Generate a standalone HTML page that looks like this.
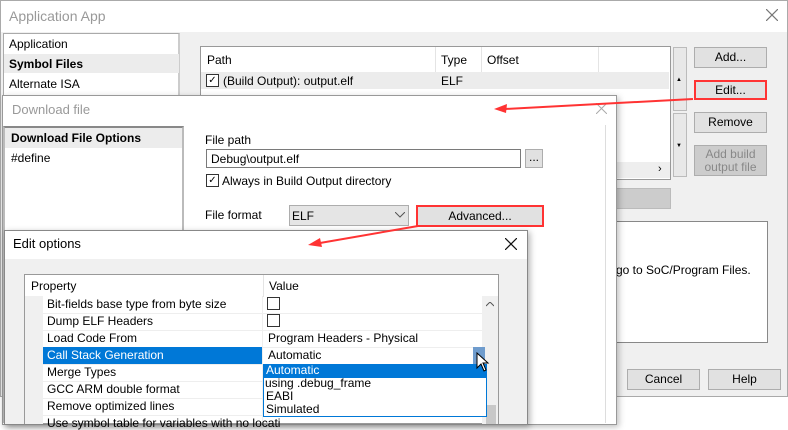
<!DOCTYPE html>
<html><head><style>
*{margin:0;padding:0;box-sizing:border-box}
body{width:788px;height:423px;overflow:hidden;background:#fff;font-family:"Liberation Sans",sans-serif;font-size:12px;color:#000;position:relative}
.a{position:absolute}
.t{position:absolute;white-space:nowrap;line-height:14px}
.btn{position:absolute;background:#e1e1e1;border:1px solid #adadad;text-align:center;line-height:18px}
.cb{position:absolute;width:13px;height:13px;border:1px solid #333;background:#fff}
</style></head><body>
<div class="a" style="left:0;top:0;width:788px;height:397px;border:1px solid #aaa;background:#f0f0f0"></div>
<div class="a" style="left:1px;top:1px;width:786px;height:31px;background:#fff"></div>
<div class="t" style="left:9px;top:9px;font-size:14px;color:#999">Application App</div>
<svg class="a" style="left:766px;top:9px" width="12" height="12"><path d="M0 0L12 12M12 0L0 12" stroke="#777" stroke-width="1.2"/></svg>
<div class="a" style="left:3px;top:33px;width:177px;height:70px;background:#fff;border:1px solid #aaa;border-right:2px solid #ccc"></div>
<div class="a" style="left:4px;top:54px;width:175px;height:19px;background:#ececec"></div>
<div class="t" style="left:9px;top:37px">Application</div>
<div class="t" style="left:9px;top:57px;font-weight:bold">Symbol Files</div>
<div class="t" style="left:9px;top:77px">Alternate ISA</div>
<div class="a" style="left:200px;top:46px;width:471px;height:134px;background:#fff;border:1px solid #999"></div>
<div class="a" style="left:201px;top:72px;width:468px;height:17px;background:#ececec"></div>
<div class="a" style="left:435px;top:47px;width:1px;height:25px;background:#e4e4e4"></div>
<div class="a" style="left:481px;top:47px;width:1px;height:25px;background:#e4e4e4"></div>
<div class="a" style="left:598px;top:47px;width:1px;height:25px;background:#e4e4e4"></div>
<div class="t" style="left:207px;top:53px">Path</div>
<div class="t" style="left:441px;top:53px">Type</div>
<div class="t" style="left:487px;top:53px">Offset</div>
<div class="cb" style="left:206px;top:74px;font-size:10px;line-height:11px;text-align:center">✓</div>
<div class="t" style="left:223px;top:74px">(Build Output): output.elf</div>
<div class="t" style="left:441px;top:74px">ELF</div>
<div class="a" style="left:610px;top:162px;width:60px;height:16px;background:#eee"></div>
<div class="t" style="left:658px;top:162px;font-size:11px">›</div>
<div class="a" style="left:673px;top:47px;width:14px;height:64px;background:#e8e8e8;border:1px solid #bbb"></div>
<div class="a" style="left:673px;top:113px;width:14px;height:64px;background:#e8e8e8;border:1px solid #bbb"></div>
<div class="t" style="left:676px;top:73px;font-size:6px">▲</div>
<div class="t" style="left:676px;top:139px;font-size:6px">▼</div>
<div class="btn" style="left:694px;top:47px;width:73px;height:21px">Add...</div>
<div class="btn" style="left:694px;top:80px;width:73px;height:20px;border:2px solid #f33;line-height:16px">Edit...</div>
<div class="btn" style="left:694px;top:112px;width:73px;height:21px">Remove</div>
<div class="btn" style="left:694px;top:145px;width:73px;height:31px;background:#ccc;color:#888;line-height:13px;padding-top:2px">Add build<br>output file</div>
<div class="a" style="left:615px;top:188px;width:56px;height:21px;background:#ccc;border:1px solid #bbb"></div>
<div class="a" style="left:615px;top:221px;width:153px;height:122px;background:#fff;border:1px solid #888"></div>
<div class="t" style="left:616px;top:263px">go to SoC/Program Files.</div>
<div class="btn" style="left:627px;top:369px;width:73px;height:21px">Cancel</div>
<div class="btn" style="left:708px;top:369px;width:73px;height:21px">Help</div>
<div class="a" style="left:2px;top:95px;width:615px;height:330px;background:#fff;border:1px solid #999;box-shadow:2px 2px 6px rgba(0,0,0,.25)"></div>
<div class="t" style="left:12px;top:103px;font-size:13px;color:#999">Download file</div>
<svg class="a" style="left:596px;top:103px" width="11" height="11"><path d="M0 0L11 11M11 0L0 11" stroke="#aaa" stroke-width="1"/></svg>
<div class="a" style="left:3px;top:126px;width:181px;height:297px;background:#fff;border:2px solid #bbb;border-top-color:#888"></div>
<div class="a" style="left:5px;top:128px;width:177px;height:20px;background:#ececec"></div>
<div class="t" style="left:11px;top:131px;font-weight:bold">Download File Options</div>
<div class="t" style="left:11px;top:151px">#define</div>
<div class="a" style="left:605px;top:125px;width:1px;height:298px;background:#ddd"></div>
<div class="t" style="left:205px;top:133px">File path</div>
<div class="a" style="left:206px;top:149px;width:315px;height:19px;border:1px solid #7a7a7a;background:#fff"></div>
<div class="t" style="left:211px;top:152px">Debug\output.elf</div>
<div class="btn" style="left:525px;top:149px;width:18px;height:19px;line-height:14px">...</div>
<div class="cb" style="left:206px;top:174px;font-size:10px;line-height:11px;text-align:center">✓</div>
<div class="t" style="left:222px;top:174px">Always in Build Output directory</div>
<div class="t" style="left:205px;top:208px">File format</div>
<div class="a" style="left:289px;top:205px;width:120px;height:21px;background:#e5e5e5;border:1px solid #adadad"></div>
<div class="t" style="left:292px;top:209px">ELF</div>
<svg class="a" style="left:395px;top:212px" width="10" height="6"><path d="M0 0L5 5L10 0" stroke="#555" fill="none"/></svg>
<div class="btn" style="left:416px;top:205px;width:128px;height:22px;border:2px solid #f33;line-height:18px">Advanced...</div>
<div class="a" style="left:4px;top:230px;width:524px;height:195px;background:#f0f0f0;border:1px solid #888;box-shadow:2px 2px 6px rgba(0,0,0,.3)"></div>
<div class="a" style="left:5px;top:231px;width:522px;height:28px;background:#fff"></div>
<div class="t" style="left:13px;top:237px;font-size:13px">Edit options</div>
<svg class="a" style="left:505px;top:238px" width="12" height="12"><path d="M0 0L12 12M12 0L0 12" stroke="#111" stroke-width="1.2"/></svg>
<div class="a" style="left:24px;top:274px;width:475px;height:150px;background:#fff;border:1px solid #999"></div>
<div class="a" style="left:263px;top:275px;width:1px;height:22px;background:#e4e4e4"></div>
<div class="t" style="left:31px;top:279px">Property</div>
<div class="t" style="left:269px;top:279px">Value</div>
<div class="a" style="left:25px;top:296px;width:18px;height:128px;background:#f0f0f0"></div>
<div class="a" style="left:482px;top:296px;width:16px;height:128px;background:#f0f0f0"></div>
<div class="a" style="left:486px;top:405px;width:10px;height:19px;background:#c8c8c8"></div>
<svg class="a" style="left:486px;top:302px" width="8" height="5"><path d="M0 4L4 0L8 4" stroke="#555" fill="none"/></svg>
<div class="a" style="left:43px;top:313px;width:439px;height:1px;background:#eee"></div>
<div class="a" style="left:43px;top:330px;width:439px;height:1px;background:#eee"></div>
<div class="a" style="left:43px;top:347px;width:439px;height:1px;background:#eee"></div>
<div class="a" style="left:43px;top:364px;width:439px;height:1px;background:#eee"></div>
<div class="a" style="left:43px;top:381px;width:220px;height:1px;background:#eee"></div>
<div class="a" style="left:43px;top:398px;width:220px;height:1px;background:#eee"></div>
<div class="a" style="left:43px;top:415px;width:220px;height:1px;background:#eee"></div>
<div class="a" style="left:262px;top:296px;width:1px;height:128px;background:#eee"></div>
<div class="a" style="left:43px;top:347px;width:219px;height:17px;background:#0078d7"></div>
<div class="t" style="left:47px;top:297px">Bit-fields base type from byte size</div>
<div class="cb" style="left:267px;top:297px"></div>
<div class="t" style="left:47px;top:314px">Dump ELF Headers</div>
<div class="cb" style="left:267px;top:314px"></div>
<div class="t" style="left:47px;top:331px">Load Code From</div>
<div class="t" style="left:268px;top:331px">Program Headers - Physical</div>
<div class="t" style="left:47px;top:348px;color:#fff">Call Stack Generation</div>
<div class="t" style="left:268px;top:348px">Automatic</div>
<div class="a" style="left:473px;top:347px;width:12px;height:17px;background:#6f9ccd"></div>
<div class="t" style="left:47px;top:365px">Merge Types</div>
<div class="t" style="left:47px;top:382px">GCC ARM double format</div>
<div class="t" style="left:47px;top:399px">Remove optimized lines</div>
<div class="t" style="left:47px;top:416px">Use symbol table for variables with no locati</div>
<div class="a" style="left:263px;top:364px;width:224px;height:53px;background:#fff;border:1px solid #0078d7"></div>
<div class="a" style="left:264px;top:365px;width:222px;height:13px;background:#0078d7"></div>
<div class="t" style="left:266px;top:364px;color:#fff;line-height:13px">Automatic</div>
<div class="t" style="left:265px;top:377px;line-height:13px">using .debug_frame</div>
<div class="t" style="left:266px;top:390px;line-height:13px">EABI</div>
<div class="t" style="left:266px;top:403px;line-height:13px">Simulated</div>
<svg class="a" style="left:475px;top:352px" width="16" height="22"><path d="M2 1 L2 16 L6 12 L9 19 L11 18 L8 11 L13 11 Z" fill="#fff" stroke="#000" stroke-width="1"/></svg>
<svg class="a" style="left:0;top:0" width="788" height="423">
<line x1="693" y1="99" x2="505" y2="109" stroke="#f33" stroke-width="2"/>
<path d="M494 109 L507 104 L506 113 Z" fill="#f33"/>
<line x1="418" y1="226" x2="320" y2="243" stroke="#f33" stroke-width="2"/>
<path d="M308 245 L320 238 L322 247 Z" fill="#f33"/>
</svg>
</body></html>
